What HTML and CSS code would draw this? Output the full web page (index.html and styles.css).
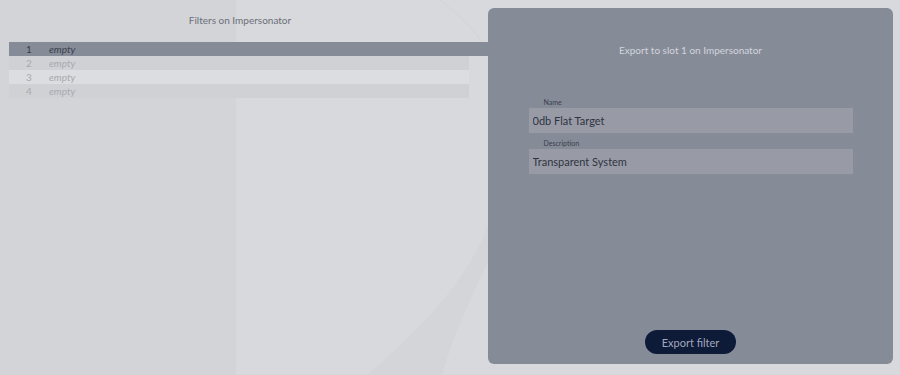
FILE: index.html
```html
<!DOCTYPE html>
<html lang="en">
<head>
    <meta charset="UTF-8">
    <meta name="viewport" content="width=device-width, initial-scale=1.0">
    <title>Export Filter - Impersonator</title>
    <link rel="stylesheet" href="styles.css">
</head>
<body>
    <!-- Background decoration -->
    <svg class="backdrop" width="900" height="375" viewBox="0 0 900 375">
        <rect x="0" y="0" width="236" height="375" fill="#d3d4d8"/>
        <path d="M367 375 C 420 330, 468 280, 488 225 L 488 262 C 470 300, 452 338, 442 375 Z" fill="#d4d5d9"/>
        <path d="M440 0 C 460 15, 478 35, 488 50" stroke="#d3d4d8" fill="none"/>
    </svg>

    <div class="main">
        <div class="filters">
            <h2 class="filters-title">Filters on Impersonator</h2>
            <ul class="slot-list">
                <li class="slot selected"><span class="slot-num">1</span><span class="slot-name">empty</span></li>
                <li class="slot"><span class="slot-num">2</span><span class="slot-name">empty</span></li>
                <li class="slot light"><span class="slot-num">3</span><span class="slot-name">empty</span></li>
                <li class="slot"><span class="slot-num">4</span><span class="slot-name">empty</span></li>
            </ul>
        </div>

        <div class="export-panel">
            <h2 class="export-title">Export to slot 1 on Impersonator</h2>
            <form class="export-form">
                <div class="form-group">
                    <label for="filter-name">Name</label>
                    <input type="text" id="filter-name" value="0db Flat Target">
                </div>
                <div class="form-group">
                    <label for="filter-desc">Description</label>
                    <input type="text" id="filter-desc" value="Transparent System">
                </div>
            </form>
            <div class="button-group">
                <button type="button">Export filter</button>
            </div>
        </div>
    </div>
</body>
</html>
```

FILE: styles.css
```css
/* General Styles */
body {
    font-family: Lato, "Open Sans", sans-serif;
    background-color: #d8d9dd;
    margin: 0;
    padding: 0;
    color: #333;
    width: 900px;
    height: 375px;
    overflow: hidden;
    position: relative;
}

.backdrop {
    position: absolute;
    top: 0;
    left: 0;
    z-index: 0;
}

.main {
    position: relative;
    z-index: 1;
    display: flex;
    height: 375px;
}

/* Filter list */
.filters {
    width: 488px;
    flex-shrink: 0;
}

.filters-title {
    margin: 13px 0 0;
    font-size: 10px;
    font-weight: normal;
    color: #6b6f78;
    text-align: center;
    line-height: 14px;
    padding-right: 8px;
}

.slot-list {
    list-style: none;
    margin: 15px 19px 0 9px;
    padding: 0;
}

.slot {
    display: flex;
    height: 14px;
    line-height: 14px;
    font-size: 10px;
    background-color: #d0d1d5;
    color: #a7a9af;
}

.slot.light {
    background-color: #dcdde0;
}

.slot.selected {
    background-color: #868b98;
    color: #3a3f4c;
    margin-right: -19px;
}

.slot-num {
    width: 40px;
    text-align: center;
}

.slot-name {
    font-style: italic;
}

/* Export panel */
.export-panel {
    width: 405px;
    height: 356px;
    margin: 8px 0 0;
    background-color: #868b98;
    border-radius: 6px;
    display: flex;
    flex-direction: column;
    align-items: center;
}

.export-title {
    margin: 35px 0 0;
    font-size: 10px;
    font-weight: normal;
    color: #d2d5dc;
    line-height: 14px;
}

.export-form {
    width: 324px;
    margin-top: 40px;
}

.form-group label {
    display: block;
    font-size: 7px;
    color: #3a3f4c;
    line-height: 10px;
    padding-left: 15px;
    margin-bottom: 1px;
}

.form-group + .form-group {
    margin-top: 5px;
}

input {
    width: 100%;
    height: 25px;
    padding: 0 4px;
    font-family: inherit;
    font-size: 11px;
    color: #2f3441;
    background-color: #989ba6;
    border: none;
    box-sizing: border-box;
    outline: none;
}

.button-group {
    margin-top: auto;
    margin-bottom: 10px;
}

button {
    height: 24px;
    padding: 0 17px;
    font-family: inherit;
    font-size: 11px;
    color: #a2a8ba;
    background-color: #0d1a38;
    border: none;
    border-radius: 12px;
}
```
